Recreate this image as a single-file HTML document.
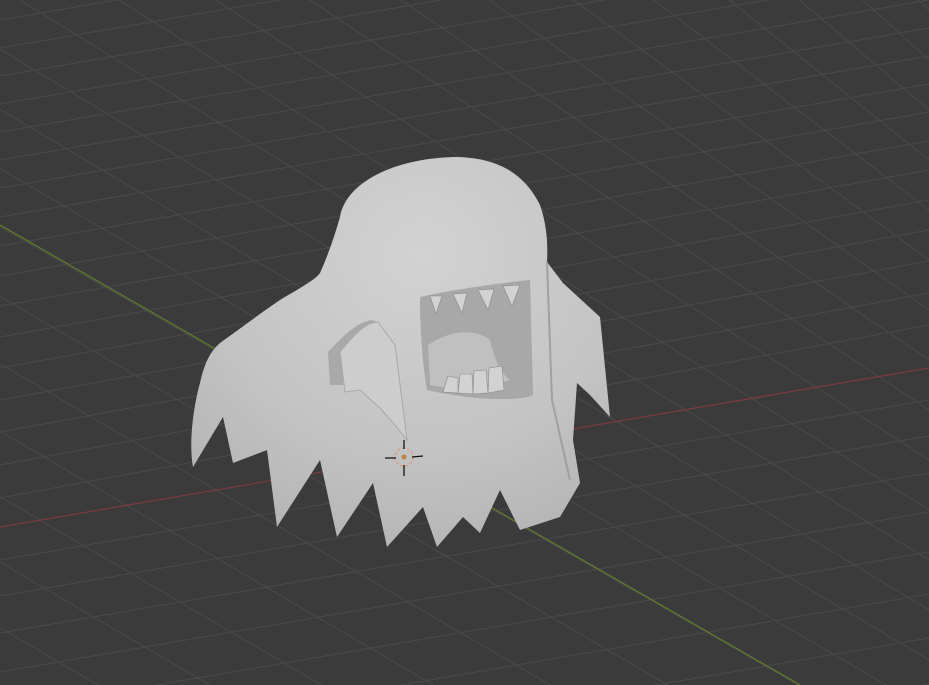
<!DOCTYPE html>
<html><head><style>html,body{margin:0;padding:0;background:#3b3b3b;overflow:hidden;width:929px;height:685px}svg{display:block}</style></head>
<body>
<svg width="929" height="685" viewBox="0 0 929 685" xmlns="http://www.w3.org/2000/svg" style="position:absolute;left:0;top:0;overflow:hidden">
<defs>
<radialGradient id="g" cx="0.55" cy="0.25" r="0.8">
<stop offset="0" stop-color="#d2d2d2"/><stop offset="0.6" stop-color="#c4c4c4"/><stop offset="1" stop-color="#b4b4b4"/>
</radialGradient>
</defs>
<rect width="929" height="685" fill="#3b3b3b"/>
<g stroke="#4a4a4a" stroke-width="1" fill="none">
<path d="M0,20 L929,-140"/><path d="M0,48 L929,-112"/><path d="M0,76 L929,-84"/><path d="M0,104 L929,-56"/>
<path d="M0,132 L929,-28"/><path d="M0,160 L929,0"/><path d="M0,188 L929,28"/><path d="M0,217 L929,56"/>
<path d="M0,246 L929,84"/><path d="M0,276 L929,112"/><path d="M0,306 L929,141"/><path d="M0,337 L929,170"/>
<path d="M0,368 L929,200"/><path d="M0,400 L929,230"/><path d="M0,432 L929,261"/><path d="M0,465 L929,293"/>
<path d="M0,498 L929,325"/><path d="M0,560 L929,400"/><path d="M0,596 L929,436"/><path d="M0,633 L929,473"/>
<path d="M0,672 L929,512"/><path d="M0,712 L929,552"/><path d="M0,754 L929,594"/><path d="M0,798 L929,638"/>
<path d="M0,844 L929,684"/>
<path d="M-500,-60 L929,760"/><path d="M-435,-85 L929,710"/><path d="M-370,-110 L929,660"/>
<path d="M-305,-135 L929,610"/><path d="M-240,-160 L929,560"/><path d="M-175,-185 L929,510"/>
<path d="M-110,-210 L929,460"/><path d="M-45,-235 L929,410"/><path d="M20,-260 L929,360"/>
<path d="M85,-285 L929,310"/><path d="M150,-310 L929,260"/><path d="M215,-335 L929,210"/>
<path d="M280,-360 L929,160"/><path d="M345,-385 L929,110"/><path d="M410,-410 L929,60"/><path d="M475,-435 L929,10"/>
<path d="M-570,-35 L900,820"/><path d="M-640,-10 L850,860"/>
<path d="M-710,15 L800,900"/><path d="M-780,40 L740,930"/><path d="M-850,65 L680,960"/>
<path d="M-920,90 L620,990"/><path d="M-990,115 L560,1020"/>
</g>
<line x1="0" y1="527" x2="929" y2="368" stroke="#7a3a40" stroke-width="1.3"/>
<line x1="0" y1="225" x2="800" y2="685" stroke="#5f7a2c" stroke-width="1.3"/>
<path fill="url(#g)" d="M340,217 C345,185 390,158 457,157 C500,158 525,175 540,205 C547,225 548,245 547,262 L563,283 L600,317 L610,417 L590,395 L577,383 L573,440 L580,483 L560,517 L520,530 L500,490 L480,533 L463,517 L437,547 L423,507 L387,547 L373,483 L337,537 L320,460 L277,527 L267,450 L233,463 L223,417 L193,467 C188,440 195,400 200,383 C205,360 212,350 220,343 C245,325 265,310 280,300 C300,288 315,280 320,273 C328,255 335,235 340,217 Z"/>
<path fill="#a9a9a9" d="M328,352 C340,340 355,322 372,320 L378,322 L360,330 L345,350 L343,385 L330,385 Z"/>
<path fill="#cdcdcd" stroke="#a8a8a8" stroke-width="1" d="M340,352 C352,337 365,322 378,322 L395,345 L407,440 L395,425 L380,408 L360,390 L345,392 Z"/>
<path fill="#a8a8a8" d="M420,297 C450,290 500,283 530,280 L533,395 C520,402 470,400 427,390 C422,360 420,330 420,297 Z"/>
<path fill="#c0c0c0" d="M428,345 C450,330 475,328 490,340 C495,360 500,372 510,380 L470,392 L430,385 Z"/>
<g fill="#d2d2d2" stroke="#8a8a8a" stroke-width="0.6">
<path d="M430,296 L442,296 L436,314 Z"/><path d="M453,294 L467,293 L462,313 Z"/><path d="M478,290 L494,289 L488,310 Z"/><path d="M503,286 L520,285 L512,306 Z"/>
<path d="M443,392 L448,376 L458,378 L458,393 Z"/><path d="M458,393 L460,374 L472,374 L473,394 Z"/><path d="M473,394 L474,371 L486,370 L488,393 Z"/><path d="M488,393 L489,368 L502,366 L504,390 Z"/>
</g>
<path fill="none" stroke="#a0a0a0" stroke-width="2" d="M547,262 L552,400 L570,480"/>
<circle cx="404" cy="457" r="9" fill="none" stroke="#d8a08a" stroke-width="1.5" stroke-dasharray="3,2"/>
<circle cx="404" cy="457" r="2.5" fill="#c08040"/>
<path d="M385,458 L396,458 M412,457 L423,456 M404,440 L404,449 M404,465 L404,476" stroke="#111" stroke-width="1.3"/>
</svg>
</body></html>
